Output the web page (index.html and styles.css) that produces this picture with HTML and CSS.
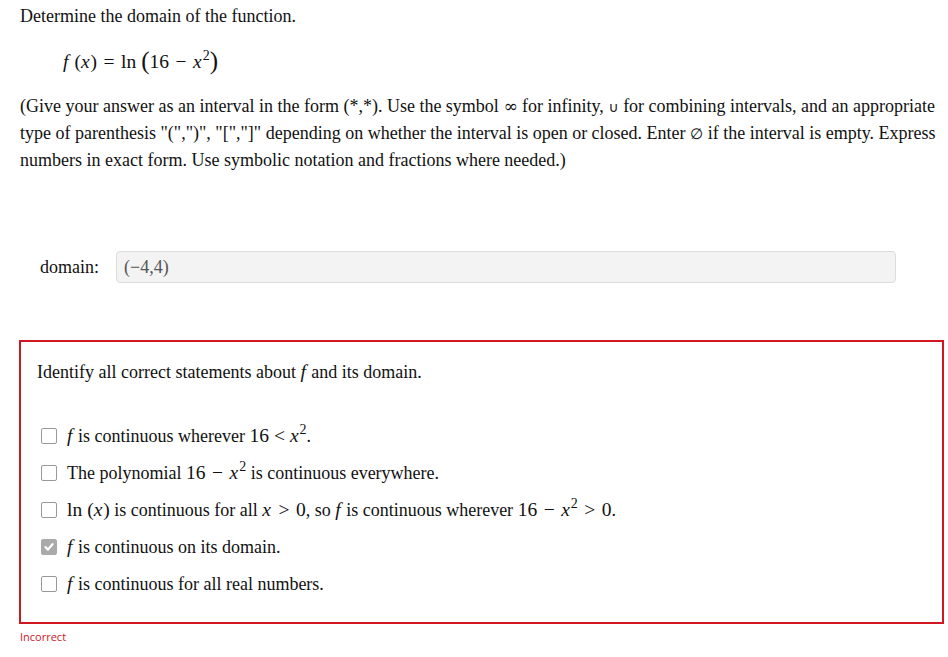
FILE: index.html
```html
<!DOCTYPE html>
<html>
<head>
<meta charset="utf-8">
<link rel="stylesheet" href="styles.css">
</head>
<body>
<div class="page">
  <p class="title">Determine the domain of the function.</p>
  <div class="formula"><span class="m"><i>f</i><span class="sp"></span>(<i>x</i>)<span class="op wide">=</span>ln<span class="sp"></span><span class="bigp">(</span>16<span class="op wide">−</span><i>x</i><sup>2</sup><span class="bigp">)</span></span></div>
  <p class="instr">(Give your answer as an interval in the form (*,*). Use the symbol <span class="inf">∞</span> for infinity, <span class="cup">∪</span> for combining intervals, and an appropriate type of parenthesis "(",")", "[","]" depending on whether the interval is open or closed. Enter <span class="empty">∅</span> if the interval is empty. Express numbers in exact form. Use symbolic notation and fractions where needed.)</p>
  <div class="domain-row">
    <span class="label">domain:</span>
    <div class="answer">(−4,4)</div>
  </div>
  <div class="panel">
    <p class="prompt">Identify all correct statements about <span class="m"><i>f</i></span> and its domain.</p>
    <ul class="opts">
      <li><span class="box"></span><span><span class="m"><i>f</i></span> is continuous wherever <span class="m">16<span class="op">&lt;</span><i>x</i><sup>2</sup></span>.</span></li>
      <li><span class="box"></span><span>The polynomial <span class="m">16<span class="op wide">−</span><i>x</i><sup>2</sup></span> is continuous everywhere.</span></li>
      <li><span class="box"></span><span><span class="m">ln<span class="sp"></span>(<i>x</i>)</span> is continuous for all <span class="m"><i>x</i><span class="op wide">&gt;</span>0</span>, so <span class="m"><i>f</i></span> is continuous wherever <span class="m">16<span class="op wide">−</span><i>x</i><sup>2</sup><span class="op wide">&gt;</span>0</span>.</span></li>
      <li><span class="box checked"><svg viewBox="0 0 16 16" width="16" height="16"><path d="M4 8.2 L6.8 11 L12 4.8" fill="none" stroke="#fff" stroke-width="2.6" stroke-linecap="round" stroke-linejoin="round"/></svg></span><span><span class="m"><i>f</i></span> is continuous on its domain.</span></li>
      <li><span class="box"></span><span><span class="m"><i>f</i></span> is continuous for all real numbers.</span></li>
    </ul>
  </div>
  <div class="status">Incorrect</div>
</div>
</body>
</html>
```
FILE: styles.css
```css
html, body { margin: 0; padding: 0; background: #fff; }
body {
  font-family: "Liberation Serif", "Times New Roman", serif;
  font-size: 18px;
  color: #111;
}
.page { padding: 3px 4px 0 20px; }
p { margin: 0; }
.title { line-height: 27px; }
.formula {
  margin: 16px 0 0 43px;
  line-height: 30px;
  height: 30px;
}
.m { font-size: 19.5px; white-space: nowrap; }
.m i { padding-right: 1px; }
.op { display: inline-block; margin: 0 5px; }
.op.wide { margin: 0 6.5px; }
.sp { display: inline-block; width: 5px; }
.m sup { font-size: 14px; line-height: 0; vertical-align: 8px; }
.bigp { font-size: 25px; vertical-align: -1px; }
.instr { margin-top: 17px; line-height: 27px; }
.inf { font-family: "DejaVu Serif", serif; font-size: 17px; line-height: 1; }
.cup { font-family: "DejaVu Sans", sans-serif; font-size: 14px; line-height: 1; }
.empty { font-family: "DejaVu Sans", sans-serif; font-size: 15px; line-height: 1; }
.domain-row {
  display: flex;
  align-items: center;
  margin-top: 77px;
  padding-left: 20px;
  padding-right: 48px;
}
.label { width: 76px; }
.answer {
  flex: 1;
  height: 30px;
  border: 1px solid #dcdcdc;
  border-radius: 4px;
  background: #f3f3f3;
  color: #555;
  line-height: 30px;
  padding-left: 7px;
}
.panel {
  margin-top: 57px;
  margin-left: -1px;
  border: 2px solid #d0161f;
  height: 284px;
  box-sizing: border-box;
  padding: 18px 16px 0 16px;
}
.prompt { line-height: 24px; }
.opts { list-style: none; margin: 33px 0 0 4px; padding: 0; }
.opts li {
  display: flex;
  align-items: center;
  height: 37px;
  gap: 10px;
}
.box {
  width: 14px;
  height: 14px;
  border: 1px solid #999;
  border-radius: 2px;
  background: #fff;
  display: flex;
  align-items: center;
  justify-content: center;
  flex: none;
}
.box.checked { background: #aaa; border-color: #aaa; }
.box svg { width: 14px; height: 14px; }
.status {
  margin-top: 5px;
  font-family: "Open Sans", "Liberation Sans", sans-serif;
  font-size: 11px;
  color: #d0161f;
  line-height: 16px;
}
```
